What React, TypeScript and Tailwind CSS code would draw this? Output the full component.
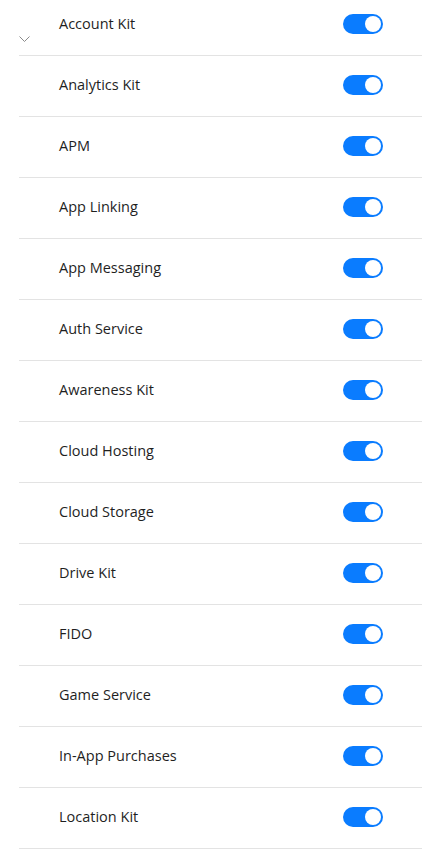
import { useState } from 'react';

const SERVICES = [
  'Account Kit',
  'Analytics Kit',
  'APM',
  'App Linking',
  'App Messaging',
  'Auth Service',
  'Awareness Kit',
  'Cloud Hosting',
  'Cloud Storage',
  'Drive Kit',
  'FIDO',
  'Game Service',
  'In-App Purchases',
  'Location Kit',
];

function Toggle({ on, onChange }: { on: boolean; onChange: () => void }) {
  return (
    <button
      type="button"
      onClick={onChange}
      className={`relative w-[40px] h-[20px] rounded-full ${on ? 'bg-[#0a7cff]' : 'bg-[#cfd3d9]'}`}
    >
      <span
        className={`absolute top-[2px] w-[16px] h-[16px] rounded-full bg-white ${on ? 'left-[22px]' : 'left-[2px]'}`}
      />
    </button>
  );
}

export default function App() {
  const [enabled, setEnabled] = useState<Record<string, boolean>>(
    Object.fromEntries(SERVICES.map(s => [s, true]))
  );

  return (
    <div
      className="w-[429px] h-[863px] overflow-hidden bg-white"
      style={{ fontFamily: '"Open Sans", "Noto Sans", sans-serif' }}
    >
      <div className="relative -mt-[5px] pl-[19px] pr-[7px]">
        <svg
          className="absolute left-[19px] top-[41px] w-[11px] h-[6px] text-[#8a8a8a]"
          viewBox="0 0 11 6"
          fill="none"
          stroke="currentColor"
          strokeWidth={1}
        >
          <path d="M0.5 0.5L5.5 5.5L10.5 0.5" />
        </svg>
        {SERVICES.map(name => (
          <div
            key={name}
            className="flex items-center justify-between h-[61px] pb-[2px] border-b border-[#e3e3e3] pl-[40px] pr-[39px]"
          >
            <span className="text-[14.5px] text-[#1f1f1f]">{name}</span>
            <Toggle
              on={enabled[name]}
              onChange={() => setEnabled(prev => ({ ...prev, [name]: !prev[name] }))}
            />
          </div>
        ))}
      </div>
    </div>
  );
}
